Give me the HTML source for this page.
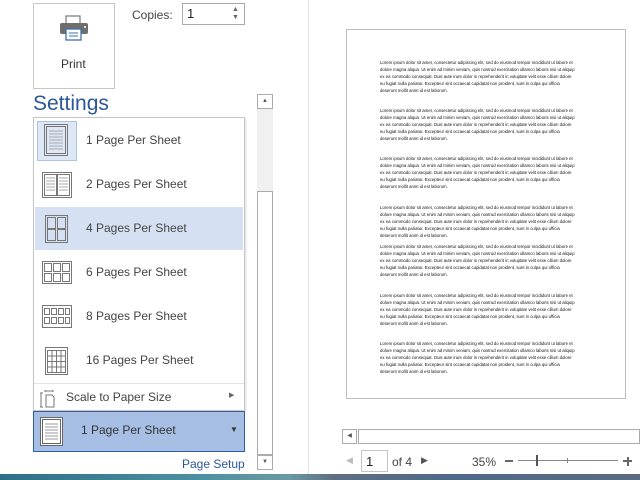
<!DOCTYPE html>
<html><head><style>
*{margin:0;padding:0;box-sizing:border-box}
body{width:640px;height:480px;position:relative;overflow:hidden;background:#fff;font-family:"Liberation Sans",sans-serif;color:#444}
.a{position:absolute}
.item{position:absolute;left:34px;width:209px;height:44px;font-size:12px;color:#444}
.item span{position:absolute;left:52px;top:15px}
.lor{position:absolute;left:380px;width:220px;font-size:4.3px;line-height:7px;color:#111;letter-spacing:0}
</style></head><body>
<div class="a" style="left:33px;top:3px;width:82px;height:86px;border:1px solid #c6c6c6"></div>
<svg class="a" style="left:58px;top:15px" width="32" height="28" viewBox="0 0 32 28">
<rect x="8" y="1" width="14" height="8" fill="#fff" stroke="#777" stroke-width="1.2"/>
<rect x="2" y="8" width="28" height="11" rx="2" fill="#6e6e6e"/>
<circle cx="27" cy="12" r="1" fill="#fff"/>
<rect x="8" y="14" width="15" height="11" fill="#fff" stroke="#3e6fa8" stroke-width="1.3"/>
<line x1="11" y1="18" x2="20" y2="18" stroke="#3e6fa8"/><line x1="11" y1="21" x2="20" y2="21" stroke="#3e6fa8"/>
</svg>
<div class="a" style="left:61px;top:57px;font-size:12px;color:#333">Print</div>
<div class="a" style="left:132px;top:8px;font-size:12px;color:#444">Copies:</div>
<div class="a" style="left:182px;top:3px;width:63px;height:22px;border:1px solid #aaa"></div>
<div class="a" style="left:187px;top:6px;font-size:13px;color:#222">1</div>
<div class="a" style="left:232px;top:6px;font-size:7px;color:#666;line-height:8px">▲<br>▼</div>
<div class="a" style="left:33px;top:92px;font-size:21px;color:#2b579a">Settings</div>
<div class="a" style="left:257px;top:94px;width:16px;height:376px;background:#f0f0f0"></div>
<div class="a" style="left:257px;top:94px;width:16px;height:15px;border:1px solid #ababab;background:#fff;font-size:6px;text-align:center;line-height:13px;color:#555">▲</div>
<div class="a" style="left:257px;top:191px;width:16px;height:264px;border:1px solid #ababab;background:#fff"></div>
<div class="a" style="left:257px;top:455px;width:16px;height:15px;border:1px solid #ababab;background:#fff;font-size:6px;text-align:center;line-height:13px;color:#555">▼</div>
<div class="a" style="left:308px;top:0;width:1px;height:474px;background:#e3e3e3"></div>
<div class="a" style="left:33px;top:117px;width:212px;height:294px;border:1px solid #c6c6c6;background:#fff;box-shadow:1px 1px 2px rgba(0,0,0,.15)"></div>
<div class="a" style="left:37px;top:121px;width:40px;height:40px;background:#dde7f5;border:1px solid #aac3e6"></div>
<div class="a" style="left:35px;top:207px;width:208px;height:43px;background:#d5e1f2"></div>
<div class="item" style="top:118px"><span>1 Page Per Sheet</span></div>
<div class="item" style="top:162px"><span>2 Pages Per Sheet</span></div>
<div class="item" style="top:206px"><span>4 Pages Per Sheet</span></div>
<div class="item" style="top:250px"><span>6 Pages Per Sheet</span></div>
<div class="item" style="top:294px"><span>8 Pages Per Sheet</span></div>
<div class="item" style="top:338px"><span>16 Pages Per Sheet</span></div>
<div class="a" style="left:34px;top:383px;width:210px;height:1px;background:#e3e3e3"></div>
<div class="a" style="left:66px;top:390px;font-size:12px;color:#444">Scale to Paper Size</div>
<div class="a" style="left:229px;top:391px;font-size:7px;color:#666">▶</div>
<svg class="a" style="left:40px;top:389px" width="16" height="20"><path d="M1 4v14M0 4h3M0 18h3M5 2h8M5 1v2M13 1v2M6 6h6l2 2v10H6z" fill="none" stroke="#777"/></svg>
<svg class="a" style="left:0;top:0" width="300" height="460" fill="none" stroke="#777">
<rect x="44.5" y="124.5" width="23" height="31"/><rect x="46.5" y="126.5" width="19" height="27"/>
<path d="M49 131h14M49 134h14M49 137h14M49 140h14M49 143h14M49 146h14M49 149h14" stroke="#aaa"/>
<rect x="42.5" y="172.5" width="29" height="25"/>
<rect x="44.5" y="174.5" width="12" height="21"/><rect x="57.5" y="174.5" width="12" height="21"/>
<path d="M46 178h9M46 181h9M46 184h9M46 187h9M46 190h9M59 178h9M59 181h9M59 184h9M59 187h9M59 190h9" stroke="#aaa"/>
<rect x="45.5" y="215.5" width="22" height="27"/>
<rect x="47.5" y="217.5" width="8" height="11"/><rect x="57.5" y="217.5" width="8" height="11"/>
<rect x="47.5" y="229.5" width="8" height="11"/><rect x="57.5" y="229.5" width="8" height="11"/>
<rect x="42.5" y="261.5" width="29" height="22"/>
<rect x="44.5" y="263.5" width="7" height="8"/><rect x="53.5" y="263.5" width="7" height="8"/><rect x="62.5" y="263.5" width="7" height="8"/>
<rect x="44.5" y="273.5" width="7" height="8"/><rect x="53.5" y="273.5" width="7" height="8"/><rect x="62.5" y="273.5" width="7" height="8"/>
<rect x="42.5" y="305.5" width="29" height="22"/>
<rect x="44.5" y="308.5" width="5" height="6"/><rect x="51.5" y="308.5" width="5" height="6"/><rect x="58.5" y="308.5" width="5" height="6"/><rect x="65.5" y="308.5" width="4" height="6"/>
<rect x="44.5" y="317.5" width="5" height="6"/><rect x="51.5" y="317.5" width="5" height="6"/><rect x="58.5" y="317.5" width="5" height="6"/><rect x="65.5" y="317.5" width="4" height="6"/>
<rect x="45.5" y="347.5" width="22" height="27"/>
<path d="M47.5 350.5h18v22h-18zM47.5 356h18M47.5 361.5h18M47.5 367h18M52 350.5v22M56.5 350.5v22M61 350.5v22"/>
</svg>
<div class="a" style="left:33px;top:411px;width:212px;height:41px;background:#a7bfe4;border:1px solid #2f5f9f"></div>
<svg class="a" style="left:40px;top:417px" width="24" height="30" fill="none" stroke="#666"><rect x="0.5" y="0.5" width="22" height="28" fill="#fff"/><rect x="2.5" y="2.5" width="18" height="24"/><path d="M5 7h13M5 10h13M5 13h13M5 16h13M5 19h13M5 22h13" stroke="#999"/></svg>
<div class="a" style="left:81px;top:423px;font-size:12px;color:#333">1 Page Per Sheet</div>
<div class="a" style="left:230px;top:425px;font-size:8px;color:#333">▼</div>
<div class="a" style="left:182px;top:457px;font-size:12px;color:#2b579a">Page Setup</div>
<div class="a" style="left:346px;top:29px;width:280px;height:370px;border:1px solid #bdbdbd"></div>
<div class="lor" style="top:59px">Lorem ipsum dolor sit amet, consectetur adipiscing elit, sed do eiusmod tempor incididunt ut labore et<br>dolore magna aliqua. Ut enim ad minim veniam, quis nostrud exercitation ullamco laboris nisi ut aliquip<br>ex ea commodo consequat. Duis aute irure dolor in reprehenderit in voluptate velit esse cillum dolore<br>eu fugiat nulla pariatur. Excepteur sint occaecat cupidatat non proident, sunt in culpa qui officia<br>deserunt mollit anim id est laborum.</div>
<div class="lor" style="top:107px">Lorem ipsum dolor sit amet, consectetur adipiscing elit, sed do eiusmod tempor incididunt ut labore et<br>dolore magna aliqua. Ut enim ad minim veniam, quis nostrud exercitation ullamco laboris nisi ut aliquip<br>ex ea commodo consequat. Duis aute irure dolor in reprehenderit in voluptate velit esse cillum dolore<br>eu fugiat nulla pariatur. Excepteur sint occaecat cupidatat non proident, sunt in culpa qui officia<br>deserunt mollit anim id est laborum.</div>
<div class="lor" style="top:155px">Lorem ipsum dolor sit amet, consectetur adipiscing elit, sed do eiusmod tempor incididunt ut labore et<br>dolore magna aliqua. Ut enim ad minim veniam, quis nostrud exercitation ullamco laboris nisi ut aliquip<br>ex ea commodo consequat. Duis aute irure dolor in reprehenderit in voluptate velit esse cillum dolore<br>eu fugiat nulla pariatur. Excepteur sint occaecat cupidatat non proident, sunt in culpa qui officia<br>deserunt mollit anim id est laborum.</div>
<div class="lor" style="top:204px">Lorem ipsum dolor sit amet, consectetur adipiscing elit, sed do eiusmod tempor incididunt ut labore et<br>dolore magna aliqua. Ut enim ad minim veniam, quis nostrud exercitation ullamco laboris nisi ut aliquip<br>ex ea commodo consequat. Duis aute irure dolor in reprehenderit in voluptate velit esse cillum dolore<br>eu fugiat nulla pariatur. Excepteur sint occaecat cupidatat non proident, sunt in culpa qui officia<br>deserunt mollit anim id est laborum.</div>
<div class="lor" style="top:243px">Lorem ipsum dolor sit amet, consectetur adipiscing elit, sed do eiusmod tempor incididunt ut labore et<br>dolore magna aliqua. Ut enim ad minim veniam, quis nostrud exercitation ullamco laboris nisi ut aliquip<br>ex ea commodo consequat. Duis aute irure dolor in reprehenderit in voluptate velit esse cillum dolore<br>eu fugiat nulla pariatur. Excepteur sint occaecat cupidatat non proident, sunt in culpa qui officia<br>deserunt mollit anim id est laborum.</div>
<div class="lor" style="top:292px">Lorem ipsum dolor sit amet, consectetur adipiscing elit, sed do eiusmod tempor incididunt ut labore et<br>dolore magna aliqua. Ut enim ad minim veniam, quis nostrud exercitation ullamco laboris nisi ut aliquip<br>ex ea commodo consequat. Duis aute irure dolor in reprehenderit in voluptate velit esse cillum dolore<br>eu fugiat nulla pariatur. Excepteur sint occaecat cupidatat non proident, sunt in culpa qui officia<br>deserunt mollit anim id est laborum.</div>
<div class="lor" style="top:340px">Lorem ipsum dolor sit amet, consectetur adipiscing elit, sed do eiusmod tempor incididunt ut labore et<br>dolore magna aliqua. Ut enim ad minim veniam, quis nostrud exercitation ullamco laboris nisi ut aliquip<br>ex ea commodo consequat. Duis aute irure dolor in reprehenderit in voluptate velit esse cillum dolore<br>eu fugiat nulla pariatur. Excepteur sint occaecat cupidatat non proident, sunt in culpa qui officia<br>deserunt mollit anim id est laborum.</div>
<div class="a" style="left:342px;top:429px;width:15px;height:15px;border:1px solid #ababab;font-size:6px;text-align:center;line-height:13px;color:#555">◀</div>
<div class="a" style="left:358px;top:429px;width:282px;height:15px;border:1px solid #ababab"></div>
<div class="a" style="left:346px;top:455px;font-size:9px;color:#bbb">◀</div>
<div class="a" style="left:361px;top:450px;width:27px;height:22px;border:1px solid #c6c6c6"></div>
<div class="a" style="left:366px;top:454px;font-size:13px;color:#222">1</div>
<div class="a" style="left:392px;top:455px;font-size:12px;color:#444">of 4</div>
<div class="a" style="left:421px;top:455px;font-size:9px;color:#555">▶</div>
<div class="a" style="left:472px;top:455px;font-size:12px;color:#444">35%</div>
<div class="a" style="left:505px;top:460px;width:8px;height:2px;background:#666"></div>
<div class="a" style="left:518px;top:460px;width:100px;height:1px;background:#888"></div>
<div class="a" style="left:536px;top:455px;width:2px;height:11px;background:#555"></div>
<div class="a" style="left:567px;top:458px;width:1px;height:5px;background:#888"></div>
<div class="a" style="left:623px;top:460px;width:9px;height:2px;background:#666"></div>
<div class="a" style="left:626.5px;top:456.5px;width:2px;height:9px;background:#666"></div>
<div class="a" style="left:0;top:474px;width:640px;height:6px;background:linear-gradient(90deg,#2d6f86,#4b8fa0 30%,#6a9aa4 45%,#5e6f82 52%,#4d6a88 70%,#5a6b80)"></div>
</body></html>
